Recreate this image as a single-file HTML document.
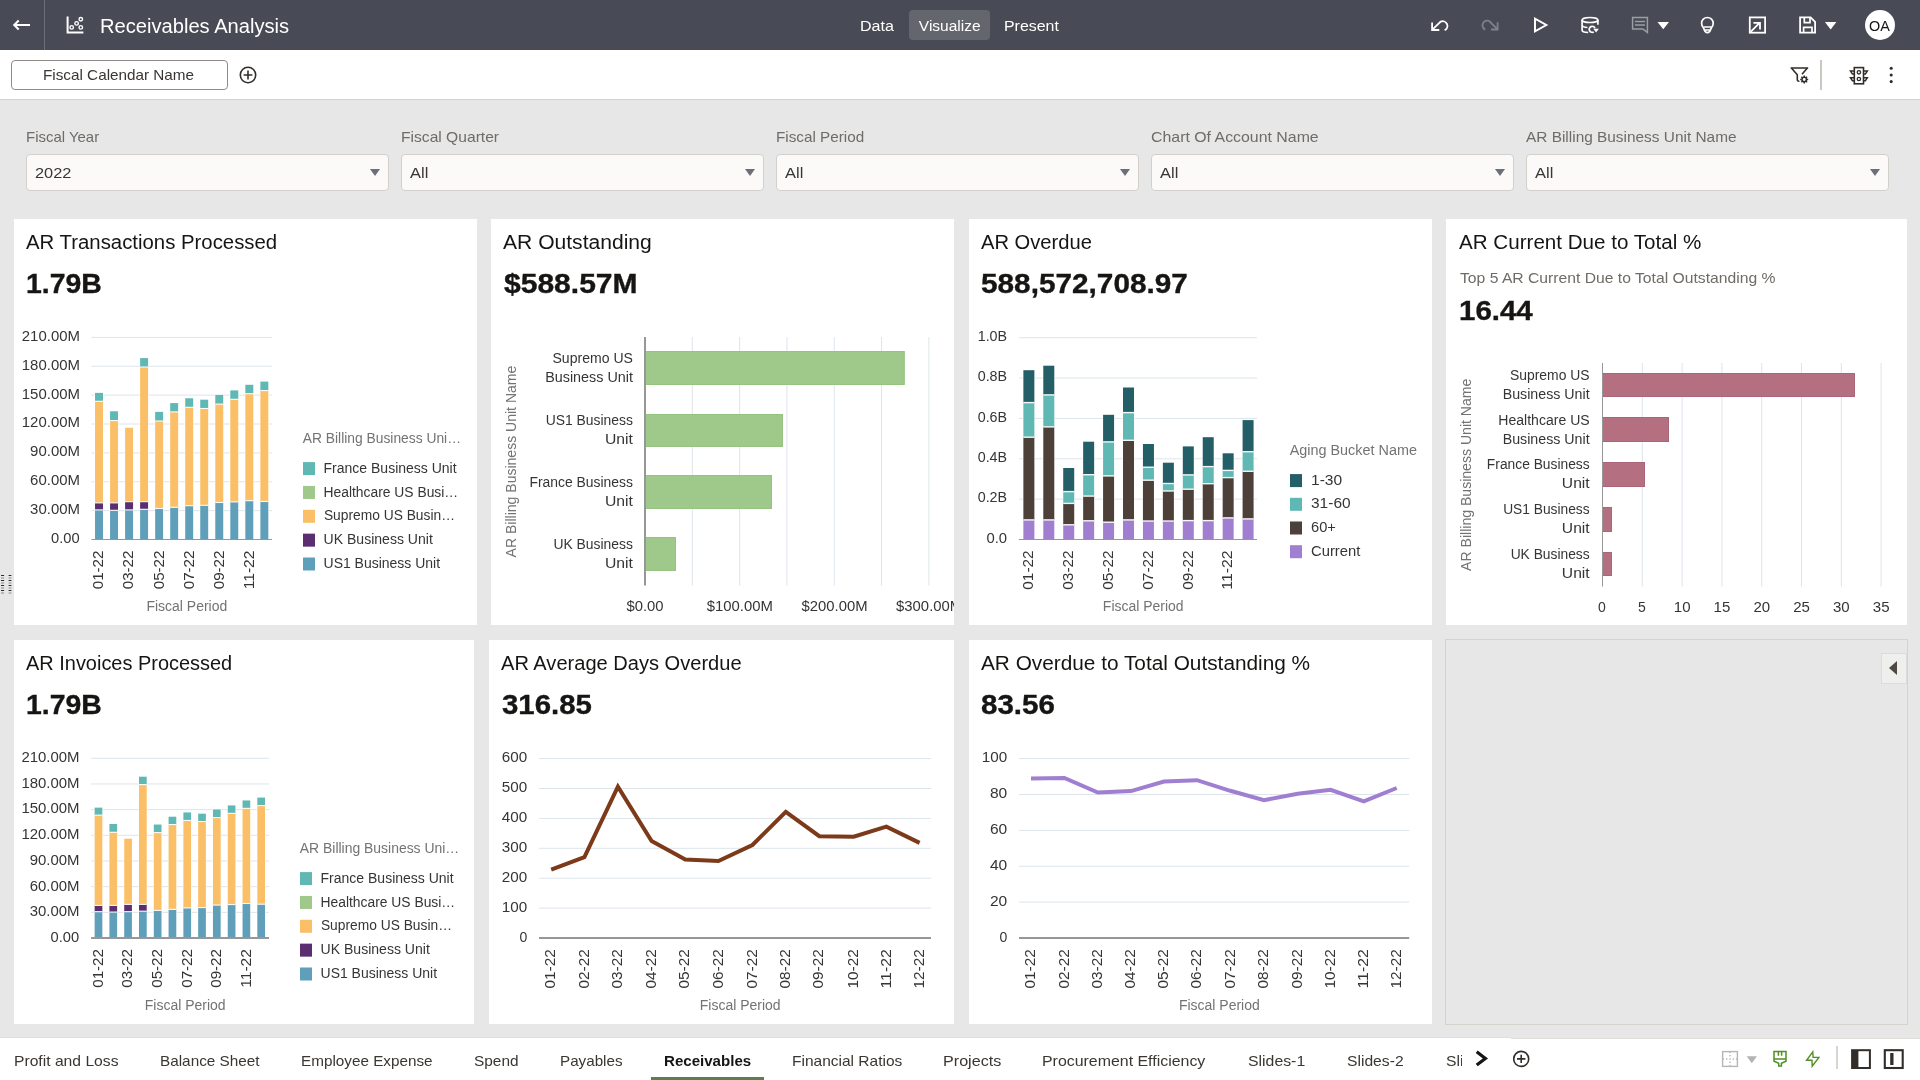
<!DOCTYPE html>
<html lang="en"><head><meta charset="utf-8"><title>Receivables Analysis</title>
<style>
*{box-sizing:border-box}
html,body{margin:0;padding:0}
body{width:1920px;height:1080px;overflow:hidden;background:#e7e7e7;font-family:"Liberation Sans",sans-serif;}
#app{will-change:transform;position:relative;width:1920px;height:1080px;overflow:hidden;background:#e7e7e7}
.t{position:absolute;white-space:pre;line-height:normal;transform-origin:0 0}
.abs{position:absolute}
.card{position:absolute;background:#fff;overflow:hidden}
svg{position:absolute;left:0;top:0;overflow:hidden}
svg text{font-family:"Liberation Sans",sans-serif}
.sel{position:absolute;height:37px;width:363px;background:#fbfaf9;border:1px solid #d3d0cb;border-radius:4px}
.sel i{position:absolute;right:8px;top:14px;width:0;height:0;border-left:5.5px solid transparent;border-right:5.5px solid transparent;border-top:7px solid #6c6f77}
</style></head>
<body><div id="app">
<div class="abs" style="left:0;top:0;width:1920px;height:50px;background:#484b55"></div>
<div class="abs" style="left:44px;top:0;width:1px;height:50px;background:#6b6f77"></div>
<span class="t" style="left:100.04px;top:15.00px;font-size:20px;color:#ffffff;transform:scaleX(1.0065);">Receivables Analysis</span>
<div class="abs" style="left:909px;top:10px;width:81px;height:30px;border-radius:4px;background:#63666d"></div>
<span class="t" style="left:860.34px;top:17.00px;font-size:15.5px;color:#ffffff;transform:scaleX(1.0360);">Data</span>
<span class="t" style="left:918.83px;top:17.00px;font-size:15.5px;color:#ffffff;">Visualize</span>
<span class="t" style="left:1004.25px;top:17.00px;font-size:15.5px;color:#ffffff;transform:scaleX(1.0263);">Present</span>
<div class="abs" style="left:1865px;top:10px;width:30px;height:30px;border-radius:50%;background:#fff"></div>
<span class="t" style="left:1869.30px;top:17.00px;font-size:15px;color:#161513;transform:scaleX(0.9602);">OA</span>
<div class="abs" style="left:0;top:50px;width:1920px;height:50px;background:#fff;border-bottom:1px solid #d3cfca"></div>
<div class="abs" style="left:11px;top:60px;width:217px;height:30px;border:1px solid #8f8b87;border-radius:4px;background:#fff"></div>
<span class="t" style="left:43.38px;top:66.00px;font-size:15px;color:#3a3632;transform:scaleX(1.0181);">Fiscal Calendar Name</span>
<div class="abs" style="left:1820px;top:60px;width:2px;height:30px;background:#cbc7c2"></div>
<span class="t" style="left:25.60px;top:128.00px;font-size:15px;color:#6f6b67;transform:scaleX(0.9973);">Fiscal Year</span>
<div class="sel" style="left:26px;top:154px"><i></i></div>
<span class="t" style="left:34.63px;top:164.00px;font-size:15px;color:#3a3632;transform:scaleX(1.0906);">2022</span>
<span class="t" style="left:400.56px;top:128.00px;font-size:15px;color:#6f6b67;transform:scaleX(1.0411);">Fiscal Quarter</span>
<div class="sel" style="left:401px;top:154px"><i></i></div>
<span class="t" style="left:409.71px;top:164.00px;font-size:15px;color:#3a3632;transform:scaleX(1.0977);">All</span>
<span class="t" style="left:775.58px;top:128.00px;font-size:15px;color:#6f6b67;transform:scaleX(1.0173);">Fiscal Period</span>
<div class="sel" style="left:776px;top:154px"><i></i></div>
<span class="t" style="left:784.71px;top:164.00px;font-size:15px;color:#3a3632;transform:scaleX(1.0977);">All</span>
<span class="t" style="left:1150.94px;top:128.00px;font-size:15px;color:#6f6b67;transform:scaleX(1.0587);">Chart Of Account Name</span>
<div class="sel" style="left:1151px;top:154px"><i></i></div>
<span class="t" style="left:1159.71px;top:164.00px;font-size:15px;color:#3a3632;transform:scaleX(1.0977);">All</span>
<span class="t" style="left:1526.04px;top:128.00px;font-size:15px;color:#6f6b67;transform:scaleX(1.0266);">AR Billing Business Unit Name</span>
<div class="sel" style="left:1526px;top:154px"><i></i></div>
<span class="t" style="left:1534.71px;top:164.00px;font-size:15px;color:#3a3632;transform:scaleX(1.0977);">All</span>
<div class="card" style="left:14px;top:219px;width:463px;height:406px"></div>
<div class="card" style="left:491px;top:219px;width:463px;height:406px"></div>
<div class="card" style="left:969px;top:219px;width:463px;height:406px"></div>
<div class="card" style="left:1446px;top:219px;width:461px;height:406px"></div>
<div class="card" style="left:14px;top:640px;width:460px;height:384px"></div>
<div class="card" style="left:489px;top:640px;width:465px;height:384px"></div>
<div class="card" style="left:969px;top:640px;width:463px;height:384px"></div>
<div class="abs" style="left:1445px;top:639px;width:463px;height:386px;border:1px solid #d6d2cc;background:#e7e7e7"></div>
<div class="abs" style="left:1880.5px;top:652.5px;width:26px;height:31px;background:#efefed;border:1px solid #dddcda"></div>
<div class="abs" style="left:1888.6px;top:661px;width:0;height:0;border-top:7px solid transparent;border-bottom:7px solid transparent;border-right:8.5px solid #4e4944"></div>
<span class="t" style="left:25.99px;top:230.90px;font-size:20px;color:#161513;transform:scaleX(1.0179);">AR Transactions Processed</span>
<span class="t" style="left:503.47px;top:230.90px;font-size:20px;color:#161513;transform:scaleX(1.0538);">AR Outstanding</span>
<span class="t" style="left:981.00px;top:230.90px;font-size:20px;color:#161513;transform:scaleX(1.0076);">AR Overdue</span>
<span class="t" style="left:1458.68px;top:230.70px;font-size:20px;color:#161513;transform:scaleX(1.0298);">AR Current Due to Total %</span>
<span class="t" style="left:26.00px;top:651.80px;font-size:20px;color:#161513;transform:scaleX(0.9973);">AR Invoices Processed</span>
<span class="t" style="left:501.30px;top:651.80px;font-size:20px;color:#161513;transform:scaleX(1.0035);">AR Average Days Overdue</span>
<span class="t" style="left:980.98px;top:651.80px;font-size:20px;color:#161513;transform:scaleX(1.0399);">AR Overdue to Total Outstanding %</span>
<span class="t" style="left:26.21px;top:268.70px;font-size:27px;color:#161513;font-weight:700;transform:scaleX(1.0513);-webkit-text-stroke:0.35px #161513;">1.79B</span>
<span class="t" style="left:503.75px;top:268.70px;font-size:27px;color:#161513;font-weight:700;transform:scaleX(1.1119);-webkit-text-stroke:0.35px #161513;">$588.57M</span>
<span class="t" style="left:981.46px;top:268.70px;font-size:27px;color:#161513;font-weight:700;transform:scaleX(1.1022);-webkit-text-stroke:0.35px #161513;">588,572,708.97</span>
<span class="t" style="left:1459.07px;top:296.10px;font-size:27px;color:#161513;font-weight:700;transform:scaleX(1.0915);-webkit-text-stroke:0.35px #161513;">16.44</span>
<span class="t" style="left:26.21px;top:689.90px;font-size:27px;color:#161513;font-weight:700;transform:scaleX(1.0513);-webkit-text-stroke:0.35px #161513;">1.79B</span>
<span class="t" style="left:501.87px;top:689.90px;font-size:27px;color:#161513;font-weight:700;transform:scaleX(1.0880);-webkit-text-stroke:0.35px #161513;">316.85</span>
<span class="t" style="left:981.47px;top:689.90px;font-size:27px;color:#161513;font-weight:700;transform:scaleX(1.0930);-webkit-text-stroke:0.35px #161513;">83.56</span>
<span class="t" style="left:1459.83px;top:268.90px;font-size:15px;color:#6f6b67;transform:scaleX(1.0461);">Top 5 AR Current Due to Total Outstanding %</span>
<div class="abs" style="left:0;top:1038px;width:1920px;height:42px;background:#fff"></div>
<div class="abs" style="left:0;top:1037px;width:1511px;height:1px;background:#e0dedb"></div>
<div class="abs" style="left:1511px;top:1037px;width:409px;height:1px;background:#e7e7e7"></div>
<div class="abs" style="left:1511px;top:1038px;width:409px;height:1px;background:#e0dedb"></div>
<span class="t" style="left:13.86px;top:1052.00px;font-size:15px;color:#3a3632;transform:scaleX(1.0441);">Profit and Loss</span>
<span class="t" style="left:160.08px;top:1052.00px;font-size:15px;color:#3a3632;transform:scaleX(1.0205);">Balance Sheet</span>
<span class="t" style="left:301.08px;top:1052.00px;font-size:15px;color:#3a3632;transform:scaleX(1.0180);">Employee Expense</span>
<span class="t" style="left:474.46px;top:1052.00px;font-size:15px;color:#3a3632;transform:scaleX(1.0277);">Spend</span>
<span class="t" style="left:560.09px;top:1052.00px;font-size:15px;color:#3a3632;transform:scaleX(1.0139);">Payables</span>
<span class="t" style="left:792.07px;top:1052.00px;font-size:15px;color:#3a3632;transform:scaleX(1.0333);">Financial Ratios</span>
<span class="t" style="left:943.03px;top:1052.00px;font-size:15px;color:#3a3632;transform:scaleX(1.0754);">Projects</span>
<span class="t" style="left:1042.35px;top:1052.00px;font-size:15px;color:#3a3632;transform:scaleX(1.0606);">Procurement Efficiency</span>
<span class="t" style="left:1247.75px;top:1052.00px;font-size:15px;color:#3a3632;transform:scaleX(1.0553);">Slides-1</span>
<span class="t" style="left:1346.75px;top:1052.00px;font-size:15px;color:#3a3632;transform:scaleX(1.0442);">Slides-2</span>
<span class="t" style="left:663.80px;top:1052.00px;font-size:15px;color:#161513;font-weight:700;transform:scaleX(1.0051);">Receivables</span>
<div class="abs" style="left:1445.7px;top:1040px;width:16.5px;height:40px;overflow:hidden"><span class="t" style="left:0.05px;top:12.00px;font-size:15px;color:#3a3632;transform:scaleX(1.0442);">Slides-3</span></div>
<div class="abs" style="left:651px;top:1077px;width:113px;height:3px;background:#5f7d4f"></div>
<div class="abs" style="left:1836px;top:1046px;width:2px;height:23px;background:#d9d5d0"></div>
<svg class="abs" style="left:14px;top:219px" width="463" height="406" viewBox="14 219 463 406">
<line x1="91.50" y1="510.63" x2="272.00" y2="510.63" stroke="#dde5eb" stroke-width="1"/>
<line x1="91.50" y1="481.76" x2="272.00" y2="481.76" stroke="#dde5eb" stroke-width="1"/>
<line x1="91.50" y1="452.89" x2="272.00" y2="452.89" stroke="#dde5eb" stroke-width="1"/>
<line x1="91.50" y1="424.01" x2="272.00" y2="424.01" stroke="#dde5eb" stroke-width="1"/>
<line x1="91.50" y1="395.14" x2="272.00" y2="395.14" stroke="#dde5eb" stroke-width="1"/>
<line x1="91.50" y1="366.27" x2="272.00" y2="366.27" stroke="#dde5eb" stroke-width="1"/>
<line x1="91.50" y1="337.40" x2="272.00" y2="337.40" stroke="#dde5eb" stroke-width="1"/>
<text x="79.63" y="542.90" font-size="14" fill="#353535" text-anchor="end" textLength="28.62" lengthAdjust="spacingAndGlyphs">0.00</text>
<text x="79.98" y="514.03" font-size="14" fill="#353535" text-anchor="end" textLength="49.87" lengthAdjust="spacingAndGlyphs">30.00M</text>
<text x="79.98" y="485.16" font-size="14" fill="#353535" text-anchor="end" textLength="49.87" lengthAdjust="spacingAndGlyphs">60.00M</text>
<text x="79.98" y="456.29" font-size="14" fill="#353535" text-anchor="end" textLength="49.87" lengthAdjust="spacingAndGlyphs">90.00M</text>
<text x="79.98" y="427.41" font-size="14" fill="#353535" text-anchor="end" textLength="58.17" lengthAdjust="spacingAndGlyphs">120.00M</text>
<text x="79.98" y="398.54" font-size="14" fill="#353535" text-anchor="end" textLength="58.17" lengthAdjust="spacingAndGlyphs">150.00M</text>
<text x="79.98" y="369.67" font-size="14" fill="#353535" text-anchor="end" textLength="58.17" lengthAdjust="spacingAndGlyphs">180.00M</text>
<text x="79.98" y="340.80" font-size="14" fill="#353535" text-anchor="end" textLength="58.17" lengthAdjust="spacingAndGlyphs">210.00M</text>
<rect x="94.54" y="392.39" width="8.95" height="146.61" fill="#fff"/>
<rect x="95.04" y="392.89" width="7.95" height="8.40" fill="#5fb8b3"/>
<rect x="95.04" y="401.29" width="7.95" height="101.61" fill="#fbc067"/>
<rect x="95.04" y="502.90" width="7.95" height="7.00" fill="#5a2e6f"/>
<rect x="95.04" y="509.90" width="7.95" height="29.10" fill="#5f9fb9"/>
<rect x="95.04" y="400.74" width="7.95" height="1.10" fill="rgba(255,255,255,0.93)"/>
<rect x="95.04" y="502.35" width="7.95" height="1.10" fill="rgba(255,255,255,0.93)"/>
<rect x="95.04" y="509.35" width="7.95" height="1.10" fill="rgba(255,255,255,0.93)"/>
<rect x="109.57" y="410.79" width="8.95" height="128.21" fill="#fff"/>
<rect x="110.07" y="411.29" width="7.95" height="9.30" fill="#5fb8b3"/>
<rect x="110.07" y="420.59" width="7.95" height="82.30" fill="#fbc067"/>
<rect x="110.07" y="502.90" width="7.95" height="7.40" fill="#5a2e6f"/>
<rect x="110.07" y="510.30" width="7.95" height="28.70" fill="#5f9fb9"/>
<rect x="110.07" y="420.04" width="7.95" height="1.10" fill="rgba(255,255,255,0.93)"/>
<rect x="110.07" y="502.35" width="7.95" height="1.10" fill="rgba(255,255,255,0.93)"/>
<rect x="110.07" y="509.75" width="7.95" height="1.10" fill="rgba(255,255,255,0.93)"/>
<rect x="124.60" y="427.29" width="8.95" height="111.71" fill="#fff"/>
<rect x="125.10" y="427.79" width="7.95" height="73.90" fill="#fbc067"/>
<rect x="125.10" y="501.70" width="7.95" height="8.20" fill="#5a2e6f"/>
<rect x="125.10" y="509.90" width="7.95" height="29.10" fill="#5f9fb9"/>
<rect x="125.10" y="501.15" width="7.95" height="1.10" fill="rgba(255,255,255,0.93)"/>
<rect x="125.10" y="509.35" width="7.95" height="1.10" fill="rgba(255,255,255,0.93)"/>
<rect x="139.63" y="357.59" width="8.95" height="181.41" fill="#fff"/>
<rect x="140.13" y="358.09" width="7.95" height="8.90" fill="#5fb8b3"/>
<rect x="140.13" y="366.99" width="7.95" height="134.71" fill="#fbc067"/>
<rect x="140.13" y="501.70" width="7.95" height="7.60" fill="#5a2e6f"/>
<rect x="140.13" y="509.30" width="7.95" height="29.70" fill="#5f9fb9"/>
<rect x="140.13" y="366.44" width="7.95" height="1.10" fill="rgba(255,255,255,0.93)"/>
<rect x="140.13" y="501.15" width="7.95" height="1.10" fill="rgba(255,255,255,0.93)"/>
<rect x="140.13" y="508.75" width="7.95" height="1.10" fill="rgba(255,255,255,0.93)"/>
<rect x="154.66" y="411.39" width="8.95" height="127.61" fill="#fff"/>
<rect x="155.16" y="411.89" width="7.95" height="9.10" fill="#5fb8b3"/>
<rect x="155.16" y="420.99" width="7.95" height="87.50" fill="#fbc067"/>
<rect x="155.16" y="508.50" width="7.95" height="30.50" fill="#5f9fb9"/>
<rect x="155.16" y="420.44" width="7.95" height="1.10" fill="rgba(255,255,255,0.93)"/>
<rect x="155.16" y="507.95" width="7.95" height="1.10" fill="rgba(255,255,255,0.93)"/>
<rect x="169.69" y="402.59" width="8.95" height="136.41" fill="#fff"/>
<rect x="170.19" y="403.09" width="7.95" height="8.80" fill="#5fb8b3"/>
<rect x="170.19" y="411.89" width="7.95" height="95.40" fill="#fbc067"/>
<rect x="170.19" y="507.30" width="7.95" height="31.70" fill="#5f9fb9"/>
<rect x="170.19" y="411.34" width="7.95" height="1.10" fill="rgba(255,255,255,0.93)"/>
<rect x="170.19" y="506.75" width="7.95" height="1.10" fill="rgba(255,255,255,0.93)"/>
<rect x="184.72" y="397.79" width="8.95" height="141.21" fill="#fff"/>
<rect x="185.22" y="398.29" width="7.95" height="9.00" fill="#5fb8b3"/>
<rect x="185.22" y="407.29" width="7.95" height="98.40" fill="#fbc067"/>
<rect x="185.22" y="505.70" width="7.95" height="33.30" fill="#5f9fb9"/>
<rect x="185.22" y="406.74" width="7.95" height="1.10" fill="rgba(255,255,255,0.93)"/>
<rect x="185.22" y="505.15" width="7.95" height="1.10" fill="rgba(255,255,255,0.93)"/>
<rect x="199.75" y="399.19" width="8.95" height="139.81" fill="#fff"/>
<rect x="200.25" y="399.69" width="7.95" height="8.80" fill="#5fb8b3"/>
<rect x="200.25" y="408.49" width="7.95" height="96.80" fill="#fbc067"/>
<rect x="200.25" y="505.30" width="7.95" height="33.70" fill="#5f9fb9"/>
<rect x="200.25" y="407.94" width="7.95" height="1.10" fill="rgba(255,255,255,0.93)"/>
<rect x="200.25" y="504.75" width="7.95" height="1.10" fill="rgba(255,255,255,0.93)"/>
<rect x="214.78" y="394.39" width="8.95" height="144.61" fill="#fff"/>
<rect x="215.28" y="394.89" width="7.95" height="9.20" fill="#5fb8b3"/>
<rect x="215.28" y="404.09" width="7.95" height="98.40" fill="#fbc067"/>
<rect x="215.28" y="502.50" width="7.95" height="36.50" fill="#5f9fb9"/>
<rect x="215.28" y="403.54" width="7.95" height="1.10" fill="rgba(255,255,255,0.93)"/>
<rect x="215.28" y="501.95" width="7.95" height="1.10" fill="rgba(255,255,255,0.93)"/>
<rect x="229.81" y="389.89" width="8.95" height="149.11" fill="#fff"/>
<rect x="230.31" y="390.39" width="7.95" height="8.90" fill="#5fb8b3"/>
<rect x="230.31" y="399.29" width="7.95" height="102.61" fill="#fbc067"/>
<rect x="230.31" y="501.90" width="7.95" height="37.10" fill="#5f9fb9"/>
<rect x="230.31" y="398.74" width="7.95" height="1.10" fill="rgba(255,255,255,0.93)"/>
<rect x="230.31" y="501.35" width="7.95" height="1.10" fill="rgba(255,255,255,0.93)"/>
<rect x="244.84" y="384.29" width="8.95" height="154.71" fill="#fff"/>
<rect x="245.34" y="384.79" width="7.95" height="8.90" fill="#5fb8b3"/>
<rect x="245.34" y="393.69" width="7.95" height="107.01" fill="#fbc067"/>
<rect x="245.34" y="500.70" width="7.95" height="38.30" fill="#5f9fb9"/>
<rect x="245.34" y="393.14" width="7.95" height="1.10" fill="rgba(255,255,255,0.93)"/>
<rect x="245.34" y="500.15" width="7.95" height="1.10" fill="rgba(255,255,255,0.93)"/>
<rect x="259.87" y="381.09" width="8.95" height="157.91" fill="#fff"/>
<rect x="260.37" y="381.59" width="7.95" height="9.00" fill="#5fb8b3"/>
<rect x="260.37" y="390.59" width="7.95" height="110.91" fill="#fbc067"/>
<rect x="260.37" y="501.50" width="7.95" height="37.50" fill="#5f9fb9"/>
<rect x="260.37" y="390.04" width="7.95" height="1.10" fill="rgba(255,255,255,0.93)"/>
<rect x="260.37" y="500.95" width="7.95" height="1.10" fill="rgba(255,255,255,0.93)"/>
<line x1="91.50" y1="539.50" x2="272.00" y2="539.50" stroke="#979797" stroke-width="1"/>
<text transform="translate(103.42 550.57) rotate(-90)" font-size="14" fill="#353535" text-anchor="end" textLength="38.72" lengthAdjust="spacingAndGlyphs">01-22</text>
<text transform="translate(133.47 550.57) rotate(-90)" font-size="14" fill="#353535" text-anchor="end" textLength="38.72" lengthAdjust="spacingAndGlyphs">03-22</text>
<text transform="translate(163.53 550.57) rotate(-90)" font-size="14" fill="#353535" text-anchor="end" textLength="38.72" lengthAdjust="spacingAndGlyphs">05-22</text>
<text transform="translate(193.59 550.57) rotate(-90)" font-size="14" fill="#353535" text-anchor="end" textLength="38.72" lengthAdjust="spacingAndGlyphs">07-22</text>
<text transform="translate(223.66 550.57) rotate(-90)" font-size="14" fill="#353535" text-anchor="end" textLength="38.72" lengthAdjust="spacingAndGlyphs">09-22</text>
<text transform="translate(253.71 550.57) rotate(-90)" font-size="14" fill="#353535" text-anchor="end" textLength="38.72" lengthAdjust="spacingAndGlyphs">11-22</text>
<text x="146.46" y="610.80" font-size="14" fill="#737373" textLength="80.82" lengthAdjust="spacingAndGlyphs">Fiscal Period</text>
<text x="302.78" y="443.40" font-size="14" fill="#737373" textLength="158.25" lengthAdjust="spacingAndGlyphs">AR Billing Business Uni…</text>
<rect x="303.00" y="462.10" width="12.00" height="13.00" fill="#5fb8b3"/>
<text x="323.56" y="472.70" font-size="14" fill="#353535" textLength="133.07" lengthAdjust="spacingAndGlyphs">France Business Unit</text>
<rect x="303.00" y="485.95" width="12.00" height="13.00" fill="#9fc98a"/>
<text x="323.56" y="496.55" font-size="14" fill="#353535" textLength="134.67" lengthAdjust="spacingAndGlyphs">Healthcare US Busi…</text>
<rect x="303.00" y="509.80" width="12.00" height="13.00" fill="#fbc067"/>
<text x="323.91" y="520.40" font-size="14" fill="#353535" textLength="131.02" lengthAdjust="spacingAndGlyphs">Supremo US Busin…</text>
<rect x="303.00" y="533.65" width="12.00" height="13.00" fill="#5a2e6f"/>
<text x="323.56" y="544.25" font-size="14" fill="#353535" textLength="109.27" lengthAdjust="spacingAndGlyphs">UK Business Unit</text>
<rect x="303.00" y="557.50" width="12.00" height="13.00" fill="#5f9fb9"/>
<text x="323.56" y="568.10" font-size="14" fill="#353535" textLength="116.47" lengthAdjust="spacingAndGlyphs">US1 Business Unit</text>
</svg>
<svg class="abs" style="left:491px;top:219px" width="463" height="406" viewBox="491 219 463 406">
<line x1="692.32" y1="337.10" x2="692.32" y2="585.60" stroke="#dde5eb" stroke-width="1"/>
<line x1="739.63" y1="337.10" x2="739.63" y2="585.60" stroke="#dde5eb" stroke-width="1"/>
<line x1="786.94" y1="337.10" x2="786.94" y2="585.60" stroke="#dde5eb" stroke-width="1"/>
<line x1="834.26" y1="337.10" x2="834.26" y2="585.60" stroke="#dde5eb" stroke-width="1"/>
<line x1="881.58" y1="337.10" x2="881.58" y2="585.60" stroke="#dde5eb" stroke-width="1"/>
<line x1="928.89" y1="337.10" x2="928.89" y2="585.60" stroke="#dde5eb" stroke-width="1"/>
<rect x="646.00" y="351.00" width="258.70" height="34.00" fill="#9fc98a"/>
<path d="M646.00 351.50 H904.20 V384.50 H646.00" fill="none" stroke="#95c481" stroke-width="1"/>
<text x="632.93" y="362.76" font-size="14" fill="#353535" text-anchor="end" textLength="80.42" lengthAdjust="spacingAndGlyphs">Supremo US</text>
<text x="632.93" y="381.76" font-size="14" fill="#353535" text-anchor="end" textLength="87.77" lengthAdjust="spacingAndGlyphs">Business Unit</text>
<rect x="646.00" y="414.00" width="137.00" height="33.00" fill="#9fc98a"/>
<path d="M646.00 414.50 H782.50 V446.50 H646.00" fill="none" stroke="#95c481" stroke-width="1"/>
<text x="632.93" y="424.89" font-size="14" fill="#353535" text-anchor="end" textLength="87.27" lengthAdjust="spacingAndGlyphs">US1 Business</text>
<text x="632.93" y="443.89" font-size="14" fill="#353535" text-anchor="end" textLength="27.97" lengthAdjust="spacingAndGlyphs">Unit</text>
<rect x="646.00" y="475.00" width="126.00" height="34.00" fill="#9fc98a"/>
<path d="M646.00 475.50 H771.50 V508.50 H646.00" fill="none" stroke="#95c481" stroke-width="1"/>
<text x="632.93" y="487.01" font-size="14" fill="#353535" text-anchor="end" textLength="103.47" lengthAdjust="spacingAndGlyphs">France Business</text>
<text x="632.93" y="506.01" font-size="14" fill="#353535" text-anchor="end" textLength="27.97" lengthAdjust="spacingAndGlyphs">Unit</text>
<rect x="646.00" y="537.00" width="30.00" height="34.00" fill="#9fc98a"/>
<path d="M646.00 537.50 H675.50 V570.50 H646.00" fill="none" stroke="#95c481" stroke-width="1"/>
<text x="632.93" y="549.14" font-size="14" fill="#353535" text-anchor="end" textLength="79.47" lengthAdjust="spacingAndGlyphs">UK Business</text>
<text x="632.93" y="568.14" font-size="14" fill="#353535" text-anchor="end" textLength="27.97" lengthAdjust="spacingAndGlyphs">Unit</text>
<line x1="645.00" y1="337.10" x2="645.00" y2="585.60" stroke="#979797" stroke-width="2"/>
<text x="626.51" y="611.00" font-size="14" fill="#353535" textLength="37.12" lengthAdjust="spacingAndGlyphs">$0.00</text>
<text x="706.79" y="611.00" font-size="14" fill="#353535" textLength="66.17" lengthAdjust="spacingAndGlyphs">$100.00M</text>
<text x="801.47" y="611.00" font-size="14" fill="#353535" textLength="66.07" lengthAdjust="spacingAndGlyphs">$200.00M</text>
<text x="896.10" y="611.00" font-size="14" fill="#353535" textLength="66.07" lengthAdjust="spacingAndGlyphs">$300.00M</text>
<text transform="translate(516.00 557.42) rotate(-90)" font-size="14" fill="#737373" textLength="191.75" lengthAdjust="spacingAndGlyphs">AR Billing Business Unit Name</text>
</svg>
<svg class="abs" style="left:969px;top:219px" width="463" height="406" viewBox="969 219 463 406">
<line x1="1018.90" y1="499.14" x2="1257.00" y2="499.14" stroke="#dde5eb" stroke-width="1"/>
<line x1="1018.90" y1="458.78" x2="1257.00" y2="458.78" stroke="#dde5eb" stroke-width="1"/>
<line x1="1018.90" y1="418.42" x2="1257.00" y2="418.42" stroke="#dde5eb" stroke-width="1"/>
<line x1="1018.90" y1="378.06" x2="1257.00" y2="378.06" stroke="#dde5eb" stroke-width="1"/>
<line x1="1018.90" y1="337.70" x2="1257.00" y2="337.70" stroke="#dde5eb" stroke-width="1"/>
<text x="1007.13" y="542.60" font-size="14" fill="#353535" text-anchor="end" textLength="20.62" lengthAdjust="spacingAndGlyphs">0.0</text>
<text x="1007.13" y="502.24" font-size="14" fill="#353535" text-anchor="end" textLength="29.42" lengthAdjust="spacingAndGlyphs">0.2B</text>
<text x="1007.13" y="461.88" font-size="14" fill="#353535" text-anchor="end" textLength="29.42" lengthAdjust="spacingAndGlyphs">0.4B</text>
<text x="1007.13" y="421.52" font-size="14" fill="#353535" text-anchor="end" textLength="29.42" lengthAdjust="spacingAndGlyphs">0.6B</text>
<text x="1007.13" y="381.16" font-size="14" fill="#353535" text-anchor="end" textLength="29.42" lengthAdjust="spacingAndGlyphs">0.8B</text>
<text x="1007.13" y="340.80" font-size="14" fill="#353535" text-anchor="end" textLength="29.42" lengthAdjust="spacingAndGlyphs">1.0B</text>
<rect x="1022.87" y="369.70" width="12.00" height="169.30" fill="#fff"/>
<rect x="1023.37" y="370.20" width="11.00" height="32.40" fill="#245e67"/>
<rect x="1023.37" y="402.60" width="11.00" height="34.60" fill="#5fb8b3"/>
<rect x="1023.37" y="437.20" width="11.00" height="82.70" fill="#4d4039"/>
<rect x="1023.37" y="519.90" width="11.00" height="19.10" fill="#a07fd0"/>
<rect x="1023.37" y="401.90" width="11.00" height="1.40" fill="rgba(255,255,255,0.93)"/>
<rect x="1023.37" y="436.50" width="11.00" height="1.40" fill="rgba(255,255,255,0.93)"/>
<rect x="1023.37" y="519.20" width="11.00" height="1.40" fill="rgba(255,255,255,0.93)"/>
<rect x="1042.79" y="365.20" width="12.00" height="173.80" fill="#fff"/>
<rect x="1043.29" y="365.70" width="11.00" height="29.20" fill="#245e67"/>
<rect x="1043.29" y="394.90" width="11.00" height="32.00" fill="#5fb8b3"/>
<rect x="1043.29" y="426.90" width="11.00" height="93.00" fill="#4d4039"/>
<rect x="1043.29" y="519.90" width="11.00" height="19.10" fill="#a07fd0"/>
<rect x="1043.29" y="394.20" width="11.00" height="1.40" fill="rgba(255,255,255,0.93)"/>
<rect x="1043.29" y="426.20" width="11.00" height="1.40" fill="rgba(255,255,255,0.93)"/>
<rect x="1043.29" y="519.20" width="11.00" height="1.40" fill="rgba(255,255,255,0.93)"/>
<rect x="1062.72" y="467.50" width="12.00" height="71.50" fill="#fff"/>
<rect x="1063.22" y="468.00" width="11.00" height="23.60" fill="#245e67"/>
<rect x="1063.22" y="491.60" width="11.00" height="11.80" fill="#5fb8b3"/>
<rect x="1063.22" y="503.40" width="11.00" height="21.40" fill="#4d4039"/>
<rect x="1063.22" y="524.80" width="11.00" height="14.20" fill="#a07fd0"/>
<rect x="1063.22" y="490.90" width="11.00" height="1.40" fill="rgba(255,255,255,0.93)"/>
<rect x="1063.22" y="502.70" width="11.00" height="1.40" fill="rgba(255,255,255,0.93)"/>
<rect x="1063.22" y="524.10" width="11.00" height="1.40" fill="rgba(255,255,255,0.93)"/>
<rect x="1082.65" y="441.20" width="12.00" height="97.80" fill="#fff"/>
<rect x="1083.15" y="441.70" width="11.00" height="33.00" fill="#245e67"/>
<rect x="1083.15" y="474.70" width="11.00" height="21.40" fill="#5fb8b3"/>
<rect x="1083.15" y="496.10" width="11.00" height="24.70" fill="#4d4039"/>
<rect x="1083.15" y="520.80" width="11.00" height="18.20" fill="#a07fd0"/>
<rect x="1083.15" y="474.00" width="11.00" height="1.40" fill="rgba(255,255,255,0.93)"/>
<rect x="1083.15" y="495.40" width="11.00" height="1.40" fill="rgba(255,255,255,0.93)"/>
<rect x="1083.15" y="520.10" width="11.00" height="1.40" fill="rgba(255,255,255,0.93)"/>
<rect x="1102.58" y="414.30" width="12.00" height="124.70" fill="#fff"/>
<rect x="1103.08" y="414.80" width="11.00" height="27.10" fill="#245e67"/>
<rect x="1103.08" y="441.90" width="11.00" height="34.00" fill="#5fb8b3"/>
<rect x="1103.08" y="475.90" width="11.00" height="46.30" fill="#4d4039"/>
<rect x="1103.08" y="522.20" width="11.00" height="16.80" fill="#a07fd0"/>
<rect x="1103.08" y="441.20" width="11.00" height="1.40" fill="rgba(255,255,255,0.93)"/>
<rect x="1103.08" y="475.20" width="11.00" height="1.40" fill="rgba(255,255,255,0.93)"/>
<rect x="1103.08" y="521.50" width="11.00" height="1.40" fill="rgba(255,255,255,0.93)"/>
<rect x="1122.51" y="387.00" width="12.00" height="152.00" fill="#fff"/>
<rect x="1123.01" y="387.50" width="11.00" height="25.10" fill="#245e67"/>
<rect x="1123.01" y="412.60" width="11.00" height="27.70" fill="#5fb8b3"/>
<rect x="1123.01" y="440.30" width="11.00" height="79.60" fill="#4d4039"/>
<rect x="1123.01" y="519.90" width="11.00" height="19.10" fill="#a07fd0"/>
<rect x="1123.01" y="411.90" width="11.00" height="1.40" fill="rgba(255,255,255,0.93)"/>
<rect x="1123.01" y="439.60" width="11.00" height="1.40" fill="rgba(255,255,255,0.93)"/>
<rect x="1123.01" y="519.20" width="11.00" height="1.40" fill="rgba(255,255,255,0.93)"/>
<rect x="1142.44" y="443.50" width="12.00" height="95.50" fill="#fff"/>
<rect x="1142.94" y="444.00" width="11.00" height="23.20" fill="#245e67"/>
<rect x="1142.94" y="467.20" width="11.00" height="13.00" fill="#5fb8b3"/>
<rect x="1142.94" y="480.20" width="11.00" height="40.80" fill="#4d4039"/>
<rect x="1142.94" y="521.00" width="11.00" height="18.00" fill="#a07fd0"/>
<rect x="1142.94" y="466.50" width="11.00" height="1.40" fill="rgba(255,255,255,0.93)"/>
<rect x="1142.94" y="479.50" width="11.00" height="1.40" fill="rgba(255,255,255,0.93)"/>
<rect x="1142.94" y="520.30" width="11.00" height="1.40" fill="rgba(255,255,255,0.93)"/>
<rect x="1162.37" y="462.20" width="12.00" height="76.80" fill="#fff"/>
<rect x="1162.87" y="462.70" width="11.00" height="20.80" fill="#245e67"/>
<rect x="1162.87" y="483.50" width="11.00" height="7.50" fill="#5fb8b3"/>
<rect x="1162.87" y="491.00" width="11.00" height="30.00" fill="#4d4039"/>
<rect x="1162.87" y="521.00" width="11.00" height="18.00" fill="#a07fd0"/>
<rect x="1162.87" y="482.80" width="11.00" height="1.40" fill="rgba(255,255,255,0.93)"/>
<rect x="1162.87" y="490.30" width="11.00" height="1.40" fill="rgba(255,255,255,0.93)"/>
<rect x="1162.87" y="520.30" width="11.00" height="1.40" fill="rgba(255,255,255,0.93)"/>
<rect x="1182.30" y="445.90" width="12.00" height="93.10" fill="#fff"/>
<rect x="1182.80" y="446.40" width="11.00" height="28.50" fill="#245e67"/>
<rect x="1182.80" y="474.90" width="11.00" height="14.30" fill="#5fb8b3"/>
<rect x="1182.80" y="489.20" width="11.00" height="31.40" fill="#4d4039"/>
<rect x="1182.80" y="520.60" width="11.00" height="18.40" fill="#a07fd0"/>
<rect x="1182.80" y="474.20" width="11.00" height="1.40" fill="rgba(255,255,255,0.93)"/>
<rect x="1182.80" y="488.50" width="11.00" height="1.40" fill="rgba(255,255,255,0.93)"/>
<rect x="1182.80" y="519.90" width="11.00" height="1.40" fill="rgba(255,255,255,0.93)"/>
<rect x="1202.23" y="436.70" width="12.00" height="102.30" fill="#fff"/>
<rect x="1202.73" y="437.20" width="11.00" height="29.40" fill="#245e67"/>
<rect x="1202.73" y="466.60" width="11.00" height="17.10" fill="#5fb8b3"/>
<rect x="1202.73" y="483.70" width="11.00" height="36.90" fill="#4d4039"/>
<rect x="1202.73" y="520.60" width="11.00" height="18.40" fill="#a07fd0"/>
<rect x="1202.73" y="465.90" width="11.00" height="1.40" fill="rgba(255,255,255,0.93)"/>
<rect x="1202.73" y="483.00" width="11.00" height="1.40" fill="rgba(255,255,255,0.93)"/>
<rect x="1202.73" y="519.90" width="11.00" height="1.40" fill="rgba(255,255,255,0.93)"/>
<rect x="1222.16" y="452.80" width="12.00" height="86.20" fill="#fff"/>
<rect x="1222.66" y="453.30" width="11.00" height="17.10" fill="#245e67"/>
<rect x="1222.66" y="470.40" width="11.00" height="7.20" fill="#5fb8b3"/>
<rect x="1222.66" y="477.60" width="11.00" height="40.30" fill="#4d4039"/>
<rect x="1222.66" y="517.90" width="11.00" height="21.10" fill="#a07fd0"/>
<rect x="1222.66" y="469.70" width="11.00" height="1.40" fill="rgba(255,255,255,0.93)"/>
<rect x="1222.66" y="476.90" width="11.00" height="1.40" fill="rgba(255,255,255,0.93)"/>
<rect x="1222.66" y="517.20" width="11.00" height="1.40" fill="rgba(255,255,255,0.93)"/>
<rect x="1242.09" y="419.60" width="12.00" height="119.40" fill="#fff"/>
<rect x="1242.59" y="420.10" width="11.00" height="31.60" fill="#245e67"/>
<rect x="1242.59" y="451.70" width="11.00" height="19.60" fill="#5fb8b3"/>
<rect x="1242.59" y="471.30" width="11.00" height="47.60" fill="#4d4039"/>
<rect x="1242.59" y="518.90" width="11.00" height="20.10" fill="#a07fd0"/>
<rect x="1242.59" y="451.00" width="11.00" height="1.40" fill="rgba(255,255,255,0.93)"/>
<rect x="1242.59" y="470.60" width="11.00" height="1.40" fill="rgba(255,255,255,0.93)"/>
<rect x="1242.59" y="518.20" width="11.00" height="1.40" fill="rgba(255,255,255,0.93)"/>
<line x1="1018.90" y1="539.50" x2="1257.00" y2="539.50" stroke="#979797" stroke-width="1"/>
<text transform="translate(1033.16 550.37) rotate(-90)" font-size="14" fill="#353535" text-anchor="end" textLength="39.32" lengthAdjust="spacingAndGlyphs">01-22</text>
<text transform="translate(1073.02 550.37) rotate(-90)" font-size="14" fill="#353535" text-anchor="end" textLength="39.32" lengthAdjust="spacingAndGlyphs">03-22</text>
<text transform="translate(1112.88 550.37) rotate(-90)" font-size="14" fill="#353535" text-anchor="end" textLength="39.32" lengthAdjust="spacingAndGlyphs">05-22</text>
<text transform="translate(1152.74 550.37) rotate(-90)" font-size="14" fill="#353535" text-anchor="end" textLength="39.32" lengthAdjust="spacingAndGlyphs">07-22</text>
<text transform="translate(1192.60 550.37) rotate(-90)" font-size="14" fill="#353535" text-anchor="end" textLength="39.32" lengthAdjust="spacingAndGlyphs">09-22</text>
<text transform="translate(1232.46 550.37) rotate(-90)" font-size="14" fill="#353535" text-anchor="end" textLength="39.32" lengthAdjust="spacingAndGlyphs">11-22</text>
<text x="1102.86" y="610.80" font-size="14" fill="#737373" textLength="80.72" lengthAdjust="spacingAndGlyphs">Fiscal Period</text>
<text x="1289.68" y="454.60" font-size="14" fill="#737373" textLength="127.25" lengthAdjust="spacingAndGlyphs">Aging Bucket Name</text>
<rect x="1290.00" y="474.10" width="12.00" height="13.00" fill="#245e67"/>
<text x="1311.01" y="484.70" font-size="14" fill="#353535" textLength="31.22" lengthAdjust="spacingAndGlyphs">1-30</text>
<rect x="1290.00" y="497.80" width="12.00" height="13.00" fill="#5fb8b3"/>
<text x="1311.01" y="508.40" font-size="14" fill="#353535" textLength="39.62" lengthAdjust="spacingAndGlyphs">31-60</text>
<rect x="1290.00" y="521.50" width="12.00" height="13.00" fill="#4d4039"/>
<text x="1311.01" y="532.10" font-size="14" fill="#353535" textLength="24.82" lengthAdjust="spacingAndGlyphs">60+</text>
<rect x="1290.00" y="545.20" width="12.00" height="13.00" fill="#a07fd0"/>
<text x="1311.01" y="555.80" font-size="14" fill="#353535" textLength="49.32" lengthAdjust="spacingAndGlyphs">Current</text>
</svg>
<svg class="abs" style="left:1446px;top:219px" width="461" height="406" viewBox="1446 219 461 406">
<line x1="1642.30" y1="363.00" x2="1642.30" y2="586.50" stroke="#dde5eb" stroke-width="1"/>
<line x1="1682.10" y1="363.00" x2="1682.10" y2="586.50" stroke="#dde5eb" stroke-width="1"/>
<line x1="1721.90" y1="363.00" x2="1721.90" y2="586.50" stroke="#dde5eb" stroke-width="1"/>
<line x1="1761.70" y1="363.00" x2="1761.70" y2="586.50" stroke="#dde5eb" stroke-width="1"/>
<line x1="1801.50" y1="363.00" x2="1801.50" y2="586.50" stroke="#dde5eb" stroke-width="1"/>
<line x1="1841.30" y1="363.00" x2="1841.30" y2="586.50" stroke="#dde5eb" stroke-width="1"/>
<line x1="1881.10" y1="363.00" x2="1881.10" y2="586.50" stroke="#dde5eb" stroke-width="1"/>
<rect x="1603.00" y="373.00" width="252.00" height="24.00" fill="#b47080"/>
<path d="M1603.00 373.50 H1854.50 V396.50 H1603.00" fill="none" stroke="#ab6578" stroke-width="1"/>
<text x="1589.63" y="379.95" font-size="14" fill="#353535" text-anchor="end" textLength="79.62" lengthAdjust="spacingAndGlyphs">Supremo US</text>
<text x="1589.63" y="398.95" font-size="14" fill="#353535" text-anchor="end" textLength="86.97" lengthAdjust="spacingAndGlyphs">Business Unit</text>
<rect x="1603.00" y="417.00" width="66.00" height="25.00" fill="#b47080"/>
<path d="M1603.00 417.50 H1668.50 V441.50 H1603.00" fill="none" stroke="#ab6578" stroke-width="1"/>
<text x="1589.63" y="424.65" font-size="14" fill="#353535" text-anchor="end" textLength="91.27" lengthAdjust="spacingAndGlyphs">Healthcare US</text>
<text x="1589.63" y="443.65" font-size="14" fill="#353535" text-anchor="end" textLength="86.97" lengthAdjust="spacingAndGlyphs">Business Unit</text>
<rect x="1603.00" y="462.00" width="42.00" height="25.00" fill="#b47080"/>
<path d="M1603.00 462.50 H1644.50 V486.50 H1603.00" fill="none" stroke="#ab6578" stroke-width="1"/>
<text x="1589.63" y="469.35" font-size="14" fill="#353535" text-anchor="end" textLength="102.77" lengthAdjust="spacingAndGlyphs">France Business</text>
<text x="1589.63" y="488.35" font-size="14" fill="#353535" text-anchor="end" textLength="27.77" lengthAdjust="spacingAndGlyphs">Unit</text>
<rect x="1603.00" y="507.00" width="9.00" height="25.00" fill="#b47080"/>
<path d="M1603.00 507.50 H1611.50 V531.50 H1603.00" fill="none" stroke="#ab6578" stroke-width="1"/>
<text x="1589.63" y="514.05" font-size="14" fill="#353535" text-anchor="end" textLength="86.47" lengthAdjust="spacingAndGlyphs">US1 Business</text>
<text x="1589.63" y="533.05" font-size="14" fill="#353535" text-anchor="end" textLength="27.77" lengthAdjust="spacingAndGlyphs">Unit</text>
<rect x="1603.00" y="552.00" width="9.00" height="24.00" fill="#b47080"/>
<path d="M1603.00 552.50 H1611.50 V575.50 H1603.00" fill="none" stroke="#ab6578" stroke-width="1"/>
<text x="1589.63" y="558.75" font-size="14" fill="#353535" text-anchor="end" textLength="78.97" lengthAdjust="spacingAndGlyphs">UK Business</text>
<text x="1589.63" y="577.75" font-size="14" fill="#353535" text-anchor="end" textLength="27.77" lengthAdjust="spacingAndGlyphs">Unit</text>
<line x1="1602.50" y1="363.00" x2="1602.50" y2="586.50" stroke="#979797" stroke-width="1"/>
<text x="1598.11" y="611.80" font-size="14" fill="#353535">0</text>
<text x="1637.91" y="611.80" font-size="14" fill="#353535">5</text>
<text x="1673.81" y="611.80" font-size="14" fill="#353535" textLength="16.72" lengthAdjust="spacingAndGlyphs">10</text>
<text x="1713.61" y="611.80" font-size="14" fill="#353535" textLength="16.72" lengthAdjust="spacingAndGlyphs">15</text>
<text x="1753.41" y="611.80" font-size="14" fill="#353535" textLength="16.72" lengthAdjust="spacingAndGlyphs">20</text>
<text x="1793.21" y="611.80" font-size="14" fill="#353535" textLength="16.72" lengthAdjust="spacingAndGlyphs">25</text>
<text x="1833.01" y="611.80" font-size="14" fill="#353535" textLength="16.72" lengthAdjust="spacingAndGlyphs">30</text>
<text x="1872.81" y="611.80" font-size="14" fill="#353535" textLength="16.72" lengthAdjust="spacingAndGlyphs">35</text>
<text transform="translate(1471.00 570.92) rotate(-90)" font-size="14" fill="#737373" textLength="192.25" lengthAdjust="spacingAndGlyphs">AR Billing Business Unit Name</text>
</svg>
<svg class="abs" style="left:14px;top:640px" width="460" height="384" viewBox="14 640 460 384">
<line x1="91.10" y1="912.33" x2="269.00" y2="912.33" stroke="#dde5eb" stroke-width="1"/>
<line x1="91.10" y1="886.66" x2="269.00" y2="886.66" stroke="#dde5eb" stroke-width="1"/>
<line x1="91.10" y1="860.99" x2="269.00" y2="860.99" stroke="#dde5eb" stroke-width="1"/>
<line x1="91.10" y1="835.31" x2="269.00" y2="835.31" stroke="#dde5eb" stroke-width="1"/>
<line x1="91.10" y1="809.64" x2="269.00" y2="809.64" stroke="#dde5eb" stroke-width="1"/>
<line x1="91.10" y1="783.97" x2="269.00" y2="783.97" stroke="#dde5eb" stroke-width="1"/>
<line x1="91.10" y1="758.30" x2="269.00" y2="758.30" stroke="#dde5eb" stroke-width="1"/>
<text x="79.23" y="941.85" font-size="14" fill="#353535" text-anchor="end" textLength="28.62" lengthAdjust="spacingAndGlyphs">0.00</text>
<text x="79.58" y="916.18" font-size="14" fill="#353535" text-anchor="end" textLength="49.87" lengthAdjust="spacingAndGlyphs">30.00M</text>
<text x="79.58" y="890.51" font-size="14" fill="#353535" text-anchor="end" textLength="49.87" lengthAdjust="spacingAndGlyphs">60.00M</text>
<text x="79.58" y="864.84" font-size="14" fill="#353535" text-anchor="end" textLength="49.87" lengthAdjust="spacingAndGlyphs">90.00M</text>
<text x="79.58" y="839.16" font-size="14" fill="#353535" text-anchor="end" textLength="58.17" lengthAdjust="spacingAndGlyphs">120.00M</text>
<text x="79.58" y="813.49" font-size="14" fill="#353535" text-anchor="end" textLength="58.17" lengthAdjust="spacingAndGlyphs">150.00M</text>
<text x="79.58" y="787.82" font-size="14" fill="#353535" text-anchor="end" textLength="58.17" lengthAdjust="spacingAndGlyphs">180.00M</text>
<text x="79.58" y="762.15" font-size="14" fill="#353535" text-anchor="end" textLength="58.17" lengthAdjust="spacingAndGlyphs">210.00M</text>
<rect x="94.14" y="807.14" width="8.70" height="129.86" fill="#fff"/>
<rect x="94.64" y="807.64" width="7.70" height="7.47" fill="#5fb8b3"/>
<rect x="94.64" y="815.11" width="7.70" height="90.34" fill="#fbc067"/>
<rect x="94.64" y="905.45" width="7.70" height="6.22" fill="#5a2e6f"/>
<rect x="94.64" y="911.68" width="7.70" height="25.32" fill="#5f9fb9"/>
<rect x="94.64" y="814.56" width="7.70" height="1.10" fill="rgba(255,255,255,0.93)"/>
<rect x="94.64" y="904.90" width="7.70" height="1.10" fill="rgba(255,255,255,0.93)"/>
<rect x="94.64" y="911.13" width="7.70" height="1.10" fill="rgba(255,255,255,0.93)"/>
<rect x="108.93" y="823.50" width="8.70" height="113.50" fill="#fff"/>
<rect x="109.43" y="824.00" width="7.70" height="8.27" fill="#5fb8b3"/>
<rect x="109.43" y="832.27" width="7.70" height="73.18" fill="#fbc067"/>
<rect x="109.43" y="905.45" width="7.70" height="6.58" fill="#5a2e6f"/>
<rect x="109.43" y="912.04" width="7.70" height="24.96" fill="#5f9fb9"/>
<rect x="109.43" y="831.72" width="7.70" height="1.10" fill="rgba(255,255,255,0.93)"/>
<rect x="109.43" y="904.90" width="7.70" height="1.10" fill="rgba(255,255,255,0.93)"/>
<rect x="109.43" y="911.49" width="7.70" height="1.10" fill="rgba(255,255,255,0.93)"/>
<rect x="123.72" y="838.18" width="8.70" height="98.82" fill="#fff"/>
<rect x="124.22" y="838.68" width="7.70" height="65.71" fill="#fbc067"/>
<rect x="124.22" y="904.39" width="7.70" height="7.29" fill="#5a2e6f"/>
<rect x="124.22" y="911.68" width="7.70" height="25.32" fill="#5f9fb9"/>
<rect x="124.22" y="903.84" width="7.70" height="1.10" fill="rgba(255,255,255,0.93)"/>
<rect x="124.22" y="911.13" width="7.70" height="1.10" fill="rgba(255,255,255,0.93)"/>
<rect x="138.51" y="776.20" width="8.70" height="160.80" fill="#fff"/>
<rect x="139.01" y="776.70" width="7.70" height="7.91" fill="#5fb8b3"/>
<rect x="139.01" y="784.61" width="7.70" height="119.78" fill="#fbc067"/>
<rect x="139.01" y="904.39" width="7.70" height="6.76" fill="#5a2e6f"/>
<rect x="139.01" y="911.15" width="7.70" height="25.85" fill="#5f9fb9"/>
<rect x="139.01" y="784.06" width="7.70" height="1.10" fill="rgba(255,255,255,0.93)"/>
<rect x="139.01" y="903.84" width="7.70" height="1.10" fill="rgba(255,255,255,0.93)"/>
<rect x="139.01" y="910.60" width="7.70" height="1.10" fill="rgba(255,255,255,0.93)"/>
<rect x="153.30" y="824.04" width="8.70" height="112.96" fill="#fff"/>
<rect x="153.80" y="824.54" width="7.70" height="8.09" fill="#5fb8b3"/>
<rect x="153.80" y="832.63" width="7.70" height="77.81" fill="#fbc067"/>
<rect x="153.80" y="910.43" width="7.70" height="26.57" fill="#5f9fb9"/>
<rect x="153.80" y="832.08" width="7.70" height="1.10" fill="rgba(255,255,255,0.93)"/>
<rect x="153.80" y="909.88" width="7.70" height="1.10" fill="rgba(255,255,255,0.93)"/>
<rect x="168.09" y="816.21" width="8.70" height="120.79" fill="#fff"/>
<rect x="168.59" y="816.71" width="7.70" height="7.83" fill="#5fb8b3"/>
<rect x="168.59" y="824.54" width="7.70" height="84.83" fill="#fbc067"/>
<rect x="168.59" y="909.37" width="7.70" height="27.63" fill="#5f9fb9"/>
<rect x="168.59" y="823.99" width="7.70" height="1.10" fill="rgba(255,255,255,0.93)"/>
<rect x="168.59" y="908.82" width="7.70" height="1.10" fill="rgba(255,255,255,0.93)"/>
<rect x="182.88" y="811.94" width="8.70" height="125.06" fill="#fff"/>
<rect x="183.38" y="812.44" width="7.70" height="8.00" fill="#5fb8b3"/>
<rect x="183.38" y="820.45" width="7.70" height="87.50" fill="#fbc067"/>
<rect x="183.38" y="907.94" width="7.70" height="29.06" fill="#5f9fb9"/>
<rect x="183.38" y="819.90" width="7.70" height="1.10" fill="rgba(255,255,255,0.93)"/>
<rect x="183.38" y="907.39" width="7.70" height="1.10" fill="rgba(255,255,255,0.93)"/>
<rect x="197.67" y="813.19" width="8.70" height="123.81" fill="#fff"/>
<rect x="198.17" y="813.69" width="7.70" height="7.83" fill="#5fb8b3"/>
<rect x="198.17" y="821.51" width="7.70" height="86.08" fill="#fbc067"/>
<rect x="198.17" y="907.59" width="7.70" height="29.41" fill="#5f9fb9"/>
<rect x="198.17" y="820.96" width="7.70" height="1.10" fill="rgba(255,255,255,0.93)"/>
<rect x="198.17" y="907.04" width="7.70" height="1.10" fill="rgba(255,255,255,0.93)"/>
<rect x="212.46" y="808.92" width="8.70" height="128.08" fill="#fff"/>
<rect x="212.96" y="809.42" width="7.70" height="8.18" fill="#5fb8b3"/>
<rect x="212.96" y="817.60" width="7.70" height="87.50" fill="#fbc067"/>
<rect x="212.96" y="905.10" width="7.70" height="31.90" fill="#5f9fb9"/>
<rect x="212.96" y="817.05" width="7.70" height="1.10" fill="rgba(255,255,255,0.93)"/>
<rect x="212.96" y="904.55" width="7.70" height="1.10" fill="rgba(255,255,255,0.93)"/>
<rect x="227.25" y="804.92" width="8.70" height="132.08" fill="#fff"/>
<rect x="227.75" y="805.42" width="7.70" height="7.91" fill="#5fb8b3"/>
<rect x="227.75" y="813.33" width="7.70" height="91.23" fill="#fbc067"/>
<rect x="227.75" y="904.57" width="7.70" height="32.43" fill="#5f9fb9"/>
<rect x="227.75" y="812.78" width="7.70" height="1.10" fill="rgba(255,255,255,0.93)"/>
<rect x="227.75" y="904.02" width="7.70" height="1.10" fill="rgba(255,255,255,0.93)"/>
<rect x="242.04" y="799.94" width="8.70" height="137.06" fill="#fff"/>
<rect x="242.54" y="800.44" width="7.70" height="7.91" fill="#5fb8b3"/>
<rect x="242.54" y="808.35" width="7.70" height="95.15" fill="#fbc067"/>
<rect x="242.54" y="903.50" width="7.70" height="33.50" fill="#5f9fb9"/>
<rect x="242.54" y="807.80" width="7.70" height="1.10" fill="rgba(255,255,255,0.93)"/>
<rect x="242.54" y="902.95" width="7.70" height="1.10" fill="rgba(255,255,255,0.93)"/>
<rect x="256.83" y="797.09" width="8.70" height="139.91" fill="#fff"/>
<rect x="257.33" y="797.59" width="7.70" height="8.00" fill="#5fb8b3"/>
<rect x="257.33" y="805.60" width="7.70" height="98.61" fill="#fbc067"/>
<rect x="257.33" y="904.21" width="7.70" height="32.79" fill="#5f9fb9"/>
<rect x="257.33" y="805.05" width="7.70" height="1.10" fill="rgba(255,255,255,0.93)"/>
<rect x="257.33" y="903.66" width="7.70" height="1.10" fill="rgba(255,255,255,0.93)"/>
<line x1="91.10" y1="938.00" x2="269.00" y2="938.00" stroke="#979797" stroke-width="2"/>
<text transform="translate(102.89 949.07) rotate(-90)" font-size="14" fill="#353535" text-anchor="end" textLength="38.72" lengthAdjust="spacingAndGlyphs">01-22</text>
<text transform="translate(132.47 949.07) rotate(-90)" font-size="14" fill="#353535" text-anchor="end" textLength="38.72" lengthAdjust="spacingAndGlyphs">03-22</text>
<text transform="translate(162.06 949.07) rotate(-90)" font-size="14" fill="#353535" text-anchor="end" textLength="38.72" lengthAdjust="spacingAndGlyphs">05-22</text>
<text transform="translate(191.63 949.07) rotate(-90)" font-size="14" fill="#353535" text-anchor="end" textLength="38.72" lengthAdjust="spacingAndGlyphs">07-22</text>
<text transform="translate(221.22 949.07) rotate(-90)" font-size="14" fill="#353535" text-anchor="end" textLength="38.72" lengthAdjust="spacingAndGlyphs">09-22</text>
<text transform="translate(250.79 949.07) rotate(-90)" font-size="14" fill="#353535" text-anchor="end" textLength="38.72" lengthAdjust="spacingAndGlyphs">11-22</text>
<text x="144.76" y="1009.80" font-size="14" fill="#737373" textLength="80.82" lengthAdjust="spacingAndGlyphs">Fiscal Period</text>
<text x="299.78" y="853.00" font-size="14" fill="#737373" textLength="159.55" lengthAdjust="spacingAndGlyphs">AR Billing Business Uni…</text>
<rect x="300.00" y="872.10" width="12.00" height="13.00" fill="#5fb8b3"/>
<text x="320.56" y="882.70" font-size="14" fill="#353535" textLength="133.07" lengthAdjust="spacingAndGlyphs">France Business Unit</text>
<rect x="300.00" y="895.95" width="12.00" height="13.00" fill="#9fc98a"/>
<text x="320.56" y="906.55" font-size="14" fill="#353535" textLength="134.67" lengthAdjust="spacingAndGlyphs">Healthcare US Busi…</text>
<rect x="300.00" y="919.80" width="12.00" height="13.00" fill="#fbc067"/>
<text x="320.91" y="930.40" font-size="14" fill="#353535" textLength="131.02" lengthAdjust="spacingAndGlyphs">Supremo US Busin…</text>
<rect x="300.00" y="943.65" width="12.00" height="13.00" fill="#5a2e6f"/>
<text x="320.56" y="954.25" font-size="14" fill="#353535" textLength="109.27" lengthAdjust="spacingAndGlyphs">UK Business Unit</text>
<rect x="300.00" y="967.50" width="12.00" height="13.00" fill="#5f9fb9"/>
<text x="320.56" y="978.10" font-size="14" fill="#353535" textLength="116.47" lengthAdjust="spacingAndGlyphs">US1 Business Unit</text>
</svg>
<svg class="abs" style="left:489px;top:640px" width="465" height="384" viewBox="489 640 465 384">
<line x1="539.00" y1="908.10" x2="931.00" y2="908.10" stroke="#dde5eb" stroke-width="1"/>
<line x1="539.00" y1="878.20" x2="931.00" y2="878.20" stroke="#dde5eb" stroke-width="1"/>
<line x1="539.00" y1="848.30" x2="931.00" y2="848.30" stroke="#dde5eb" stroke-width="1"/>
<line x1="539.00" y1="818.40" x2="931.00" y2="818.40" stroke="#dde5eb" stroke-width="1"/>
<line x1="539.00" y1="788.50" x2="931.00" y2="788.50" stroke="#dde5eb" stroke-width="1"/>
<line x1="539.00" y1="758.60" x2="931.00" y2="758.60" stroke="#dde5eb" stroke-width="1"/>
<text x="527.23" y="941.65" font-size="14" fill="#353535" text-anchor="end">0</text>
<text x="527.23" y="911.75" font-size="14" fill="#353535" text-anchor="end" textLength="25.42" lengthAdjust="spacingAndGlyphs">100</text>
<text x="527.23" y="881.85" font-size="14" fill="#353535" text-anchor="end" textLength="25.42" lengthAdjust="spacingAndGlyphs">200</text>
<text x="527.23" y="851.95" font-size="14" fill="#353535" text-anchor="end" textLength="25.42" lengthAdjust="spacingAndGlyphs">300</text>
<text x="527.23" y="822.05" font-size="14" fill="#353535" text-anchor="end" textLength="25.42" lengthAdjust="spacingAndGlyphs">400</text>
<text x="527.23" y="792.15" font-size="14" fill="#353535" text-anchor="end" textLength="25.42" lengthAdjust="spacingAndGlyphs">500</text>
<text x="527.23" y="762.25" font-size="14" fill="#353535" text-anchor="end" textLength="25.42" lengthAdjust="spacingAndGlyphs">600</text>
<line x1="539.00" y1="938.00" x2="931.00" y2="938.00" stroke="#979797" stroke-width="2"/>
<path d="M551.2 869.6 L584.4 857.2 L617.9 786.7 L651.6 841.1 L685.3 859.5 L718.4 861.1 L752.4 845.0 L785.8 811.8 L819.3 836.2 L853.7 836.7 L886.4 826.6 L919.6 842.9" fill="none" stroke="#7c3a1b" stroke-width="4" stroke-linejoin="miter" stroke-linecap="butt"/>
<text transform="translate(555.30 949.27) rotate(-90)" font-size="14" fill="#353535" text-anchor="end" textLength="39.22" lengthAdjust="spacingAndGlyphs">01-22</text>
<text transform="translate(588.50 949.27) rotate(-90)" font-size="14" fill="#353535" text-anchor="end" textLength="39.22" lengthAdjust="spacingAndGlyphs">02-22</text>
<text transform="translate(622.00 949.27) rotate(-90)" font-size="14" fill="#353535" text-anchor="end" textLength="39.22" lengthAdjust="spacingAndGlyphs">03-22</text>
<text transform="translate(655.70 949.27) rotate(-90)" font-size="14" fill="#353535" text-anchor="end" textLength="39.22" lengthAdjust="spacingAndGlyphs">04-22</text>
<text transform="translate(689.40 949.27) rotate(-90)" font-size="14" fill="#353535" text-anchor="end" textLength="39.22" lengthAdjust="spacingAndGlyphs">05-22</text>
<text transform="translate(722.50 949.27) rotate(-90)" font-size="14" fill="#353535" text-anchor="end" textLength="39.22" lengthAdjust="spacingAndGlyphs">06-22</text>
<text transform="translate(756.50 949.27) rotate(-90)" font-size="14" fill="#353535" text-anchor="end" textLength="39.22" lengthAdjust="spacingAndGlyphs">07-22</text>
<text transform="translate(789.90 949.27) rotate(-90)" font-size="14" fill="#353535" text-anchor="end" textLength="39.22" lengthAdjust="spacingAndGlyphs">08-22</text>
<text transform="translate(823.40 949.27) rotate(-90)" font-size="14" fill="#353535" text-anchor="end" textLength="39.22" lengthAdjust="spacingAndGlyphs">09-22</text>
<text transform="translate(857.80 949.27) rotate(-90)" font-size="14" fill="#353535" text-anchor="end" textLength="39.22" lengthAdjust="spacingAndGlyphs">10-22</text>
<text transform="translate(890.50 949.27) rotate(-90)" font-size="14" fill="#353535" text-anchor="end" textLength="39.22" lengthAdjust="spacingAndGlyphs">11-22</text>
<text transform="translate(923.70 949.27) rotate(-90)" font-size="14" fill="#353535" text-anchor="end" textLength="39.22" lengthAdjust="spacingAndGlyphs">12-22</text>
<text x="699.76" y="1009.70" font-size="14" fill="#737373" textLength="80.82" lengthAdjust="spacingAndGlyphs">Fiscal Period</text>
</svg>
<svg class="abs" style="left:969px;top:640px" width="463" height="384" viewBox="969 640 463 384">
<line x1="1019.00" y1="902.12" x2="1409.20" y2="902.12" stroke="#dde5eb" stroke-width="1"/>
<line x1="1019.00" y1="866.24" x2="1409.20" y2="866.24" stroke="#dde5eb" stroke-width="1"/>
<line x1="1019.00" y1="830.36" x2="1409.20" y2="830.36" stroke="#dde5eb" stroke-width="1"/>
<line x1="1019.00" y1="794.48" x2="1409.20" y2="794.48" stroke="#dde5eb" stroke-width="1"/>
<line x1="1019.00" y1="758.60" x2="1409.20" y2="758.60" stroke="#dde5eb" stroke-width="1"/>
<text x="1007.23" y="941.65" font-size="14" fill="#353535" text-anchor="end">0</text>
<text x="1007.23" y="905.77" font-size="14" fill="#353535" text-anchor="end" textLength="17.32" lengthAdjust="spacingAndGlyphs">20</text>
<text x="1007.23" y="869.89" font-size="14" fill="#353535" text-anchor="end" textLength="17.32" lengthAdjust="spacingAndGlyphs">40</text>
<text x="1007.23" y="834.01" font-size="14" fill="#353535" text-anchor="end" textLength="17.32" lengthAdjust="spacingAndGlyphs">60</text>
<text x="1007.23" y="798.13" font-size="14" fill="#353535" text-anchor="end" textLength="17.32" lengthAdjust="spacingAndGlyphs">80</text>
<text x="1007.23" y="762.25" font-size="14" fill="#353535" text-anchor="end" textLength="25.42" lengthAdjust="spacingAndGlyphs">100</text>
<line x1="1019.00" y1="938.00" x2="1409.20" y2="938.00" stroke="#979797" stroke-width="2"/>
<path d="M1031.0 778.4 L1064.4 777.9 L1097.9 792.6 L1131.0 791.1 L1164.0 781.5 L1197.0 780.2 L1230.3 790.8 L1264.0 800.2 L1297.7 793.7 L1330.6 789.8 L1363.8 801.4 L1396.7 788.0" fill="none" stroke="#a07fd0" stroke-width="4" stroke-linejoin="miter" stroke-linecap="butt"/>
<text transform="translate(1035.40 949.27) rotate(-90)" font-size="14" fill="#353535" text-anchor="end" textLength="39.22" lengthAdjust="spacingAndGlyphs">01-22</text>
<text transform="translate(1068.80 949.27) rotate(-90)" font-size="14" fill="#353535" text-anchor="end" textLength="39.22" lengthAdjust="spacingAndGlyphs">02-22</text>
<text transform="translate(1102.30 949.27) rotate(-90)" font-size="14" fill="#353535" text-anchor="end" textLength="39.22" lengthAdjust="spacingAndGlyphs">03-22</text>
<text transform="translate(1135.40 949.27) rotate(-90)" font-size="14" fill="#353535" text-anchor="end" textLength="39.22" lengthAdjust="spacingAndGlyphs">04-22</text>
<text transform="translate(1168.40 949.27) rotate(-90)" font-size="14" fill="#353535" text-anchor="end" textLength="39.22" lengthAdjust="spacingAndGlyphs">05-22</text>
<text transform="translate(1201.40 949.27) rotate(-90)" font-size="14" fill="#353535" text-anchor="end" textLength="39.22" lengthAdjust="spacingAndGlyphs">06-22</text>
<text transform="translate(1234.70 949.27) rotate(-90)" font-size="14" fill="#353535" text-anchor="end" textLength="39.22" lengthAdjust="spacingAndGlyphs">07-22</text>
<text transform="translate(1268.40 949.27) rotate(-90)" font-size="14" fill="#353535" text-anchor="end" textLength="39.22" lengthAdjust="spacingAndGlyphs">08-22</text>
<text transform="translate(1302.10 949.27) rotate(-90)" font-size="14" fill="#353535" text-anchor="end" textLength="39.22" lengthAdjust="spacingAndGlyphs">09-22</text>
<text transform="translate(1335.00 949.27) rotate(-90)" font-size="14" fill="#353535" text-anchor="end" textLength="39.22" lengthAdjust="spacingAndGlyphs">10-22</text>
<text transform="translate(1368.20 949.27) rotate(-90)" font-size="14" fill="#353535" text-anchor="end" textLength="39.22" lengthAdjust="spacingAndGlyphs">11-22</text>
<text transform="translate(1401.10 949.27) rotate(-90)" font-size="14" fill="#353535" text-anchor="end" textLength="39.22" lengthAdjust="spacingAndGlyphs">12-22</text>
<text x="1178.96" y="1009.70" font-size="14" fill="#737373" textLength="80.82" lengthAdjust="spacingAndGlyphs">Fiscal Period</text>
</svg>
<svg class="abs" style="left:0;top:0" width="1920" height="1080" viewBox="0 0 1920 1080" fill="none" stroke-linecap="butt">
<path d="M13.8 25 H30 M18.7 20.5 L14.2 25 L18.7 29.5" stroke="#ffffff" stroke-width="2"/>
<path d="M67.6 16.6 V32.4 H83.4" stroke="#ffffff" stroke-width="2"/>
<circle cx="71.7" cy="27.4" r="1.75" stroke="#ffffff" stroke-width="1.4"/>
<circle cx="76.6" cy="23.4" r="1.75" stroke="#ffffff" stroke-width="1.4"/>
<circle cx="80.8" cy="19.2" r="1.75" stroke="#ffffff" stroke-width="1.4"/>
<circle cx="80.8" cy="27.4" r="1.75" stroke="#ffffff" stroke-width="1.4"/>
<path d="M1432.1 22.6 V30 H1439.3 M1432.4 29.7 L1440.7 21.6 A4.6 4.6 0 1 1 1444.6 30.2" stroke="#ffffff" stroke-width="1.8"/>
<path d="M1497.6 22.2 V29.5 H1491 M1497.3 29.2 L1489.2 21 A4.5 4.5 0 1 0 1485.2 29.6" stroke="#7d8188" stroke-width="1.8"/>
<path d="M1535 18.6 V31.4 L1546.3 25 Z" stroke="#ffffff" stroke-width="2" stroke-linejoin="miter"/>
<ellipse cx="1590" cy="20" rx="7.9" ry="2.5" stroke="#ffffff" stroke-width="1.7"/>
<path d="M1582.1 20 V30.3 C1582.1 31.6 1585 32.4 1588.2 32.5 M1582.1 25.4 C1582.4 26.6 1584.6 27.3 1587.4 27.5 M1597.9 20 V24.8" stroke="#ffffff" stroke-width="1.7"/>
<path d="M1595 28.2 A3 3 0 1 0 1593.8 31.9" stroke="#ffffff" stroke-width="1.7"/>
<path d="M1593.3 28.7 H1598.9 L1596.1 32.5 Z" fill="#ffffff"/>
<path d="M1632.6 17.6 H1647.4 V32.4 L1642.8 29 H1632.6 Z" stroke="#9a9da3" stroke-width="1.5" stroke-linejoin="miter"/>
<path d="M1635 21.6 H1645 M1635 25 H1645" stroke="#9a9da3" stroke-width="1.5"/>
<path d="M1657.5 22 H1669 L1663.25 29.3 Z" fill="#ffffff"/>
<path d="M1701.6 23.3 A5.8 5.8 0 0 1 1713.2 23.3 C1713.2 25.2 1712.6 26.4 1711.6 27.4 L1709.9 31.1 Q1707.4 34.2 1704.9 31.1 L1703.2 27.4 C1702.2 26.4 1701.6 25.2 1701.6 23.3 Z" stroke="#ffffff" stroke-width="1.7" stroke-linejoin="round"/>
<path d="M1703.6 27 H1711.2 M1704.8 30 H1710" stroke="#ffffff" stroke-width="1.5"/>
<rect x="1749.8" y="17.4" width="15.3" height="15.3" stroke="#ffffff" stroke-width="1.8"/>
<path d="M1750.6 31.9 L1759.6 22.9 M1753.4 22.8 H1760 V29.6" stroke="#ffffff" stroke-width="1.8"/>
<path d="M1800.1 17.4 H1810.6 L1815.1 21.9 V32.6 H1800.1 Z" stroke="#ffffff" stroke-width="1.8" stroke-linejoin="miter"/>
<path d="M1804.3 17.4 V22.6 H1810 V17.4 M1803.6 32.6 V27.4 H1812 V32.6" stroke="#ffffff" stroke-width="1.7"/>
<path d="M1824.9 22 H1836.4 L1830.65 29.4 Z" fill="#ffffff"/>
<circle cx="248" cy="75" r="7.7" stroke="#312d2a" stroke-width="1.6"/><path d="M243.6 75 H252.4 M248 70.6 V79.4" stroke="#312d2a" stroke-width="1.6"/>
<path d="M1790.6 68 H1808.2 M1791.6 68.2 L1797.3 74.8 V79.6 Q1797.3 81.4 1799.4 81.2 M1807.2 68.2 L1802 74.2" stroke="#312d2a" stroke-width="1.6"/>
<circle cx="1804.2" cy="79.5" r="2.2" stroke="#312d2a" stroke-width="1.5"/>
<path d="M1806.80 79.50 L1808.20 79.50 M1806.04 81.34 L1807.03 82.33 M1804.20 82.10 L1804.20 83.50 M1802.36 81.34 L1801.37 82.33 M1801.60 79.50 L1800.20 79.50 M1802.36 77.66 L1801.37 76.67 M1804.20 76.90 L1804.20 75.50 M1806.04 77.66 L1807.03 76.67" stroke="#312d2a" stroke-width="1.5"/>
<rect x="1854.3" y="67.6" width="9.2" height="16.2" stroke="#312d2a" stroke-width="1.6"/>
<circle cx="1858.9" cy="72.3" r="1.7" stroke="#312d2a" stroke-width="1.3"/><circle cx="1858.9" cy="79" r="1.7" stroke="#312d2a" stroke-width="1.3"/>
<path d="M1854.3 71 H1850.4 L1852.4 74 H1854.3 M1854.3 77.7 H1850.4 L1852.4 80.7 H1854.3 M1863.5 71 H1867.4 L1865.4 74 H1863.5 M1863.5 77.7 H1867.4 L1865.4 80.7 H1863.5" stroke="#312d2a" stroke-width="1.4"/>
<circle cx="1891.2" cy="68.3" r="1.55" fill="#312d2a"/>
<circle cx="1891.2" cy="75" r="1.55" fill="#312d2a"/>
<circle cx="1891.2" cy="81.6" r="1.55" fill="#312d2a"/>
<path d="M1476.7 1051.7 L1485.4 1058.4 L1476.7 1065.1" stroke="#161513" stroke-width="3.2"/>
<circle cx="1521.2" cy="1058.9" r="7.5" stroke="#312d2a" stroke-width="1.6"/><path d="M1517 1058.9 H1525.4 M1521.2 1054.7 V1063.1" stroke="#312d2a" stroke-width="1.6"/>
<rect x="1722.6" y="1051.6" width="14.8" height="14.8" stroke="#b6b6b6" stroke-width="1.4"/>
<rect x="1722.63" y="1058.3" width="1.4" height="1.4" fill="#b4b4b4"/>
<rect x="1729.3" y="1051.63" width="1.4" height="1.4" fill="#b4b4b4"/>
<rect x="1725.96" y="1058.3" width="1.4" height="1.4" fill="#b4b4b4"/>
<rect x="1729.3" y="1054.96" width="1.4" height="1.4" fill="#b4b4b4"/>
<rect x="1729.30" y="1058.3" width="1.4" height="1.4" fill="#b4b4b4"/>
<rect x="1732.63" y="1058.3" width="1.4" height="1.4" fill="#b4b4b4"/>
<rect x="1729.3" y="1061.63" width="1.4" height="1.4" fill="#b4b4b4"/>
<rect x="1735.96" y="1058.3" width="1.4" height="1.4" fill="#b4b4b4"/>
<rect x="1729.3" y="1064.96" width="1.4" height="1.4" fill="#b4b4b4"/>
<path d="M1746.7 1056.2 H1756.9 L1751.8 1063.2 Z" fill="#b3b3b3"/>
<path d="M1774 1051.5 H1786 V1061.3 L1781.4 1063.3 V1066.1 H1778.7 V1063.3 L1774 1061.3 Z M1774 1058.9 H1786 M1778.4 1051.5 V1055.8 M1781.6 1051.5 V1055.8" stroke="#508f24" stroke-width="1.5" stroke-linejoin="miter"/>
<path d="M1812.75 1051.8 L1806.6 1060.25 H1812 L1812.2 1066.2 L1818.9 1057.4 H1813.1 Z" stroke="#508f24" stroke-width="1.4" stroke-linejoin="miter"/>
<rect x="1852.1" y="1050.2" width="17.8" height="17.8" stroke="#312d2a" stroke-width="2"/><rect x="1852" y="1050" width="6.4" height="18" fill="#312d2a"/>
<rect x="1884.8" y="1050.2" width="17.9" height="17.8" stroke="#312d2a" stroke-width="2.1"/><rect x="1890.2" y="1053" width="3.3" height="12" fill="#312d2a"/>
<rect x="1" y="575.0" width="3.1" height="1" fill="#2f2b28"/><rect x="8.6" y="575.0" width="2.8" height="1" fill="#2f2b28"/>
<rect x="1" y="577.5" width="3.1" height="1" fill="#8e8a86"/><rect x="8.6" y="577.5" width="2.8" height="1" fill="#8e8a86"/>
<rect x="1" y="580.0" width="3.1" height="1" fill="#2f2b28"/><rect x="8.6" y="580.0" width="2.8" height="1" fill="#2f2b28"/>
<rect x="1" y="582.5" width="3.1" height="1" fill="#8e8a86"/><rect x="8.6" y="582.5" width="2.8" height="1" fill="#8e8a86"/>
<rect x="1" y="585.0" width="3.1" height="1" fill="#2f2b28"/><rect x="8.6" y="585.0" width="2.8" height="1" fill="#2f2b28"/>
<rect x="1" y="587.5" width="3.1" height="1" fill="#8e8a86"/><rect x="8.6" y="587.5" width="2.8" height="1" fill="#8e8a86"/>
<rect x="1" y="590.0" width="3.1" height="1" fill="#2f2b28"/><rect x="8.6" y="590.0" width="2.8" height="1" fill="#2f2b28"/>
<rect x="1" y="592.5" width="3.1" height="1" fill="#8e8a86"/><rect x="8.6" y="592.5" width="2.8" height="1" fill="#8e8a86"/>
</svg>
</div></body></html>
